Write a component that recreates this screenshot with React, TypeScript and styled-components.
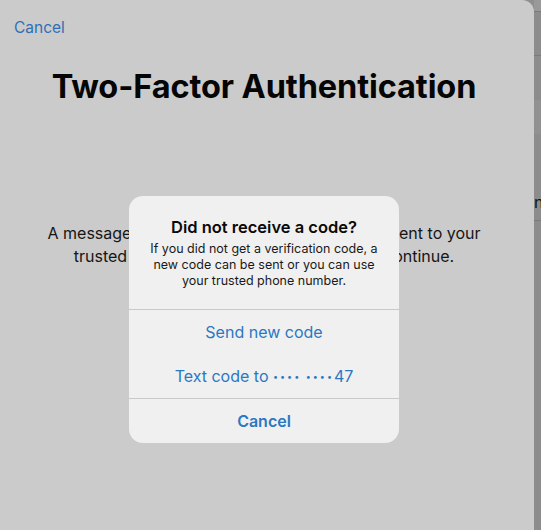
import React from "react";
import styled, { createGlobalStyle } from "styled-components";

const GlobalStyle = createGlobalStyle`
  html, body {
    margin: 0;
    padding: 0;
    background: #8f8f8f;
  }
  body {
    font-family: Inter, "Liberation Sans", Arial, sans-serif;
    -webkit-font-smoothing: antialiased;
  }
`;

const Screen = styled.div`
  position: relative;
  width: 541px;
  height: 530px;
  display: flex;
  overflow: hidden;
`;

const Sheet = styled.div`
  flex: 0 0 534px;
  height: 100%;
  background: #cbcbcb;
  border-top-right-radius: 12px;
  display: flex;
  flex-direction: column;
  align-items: center;
`;

const TopBar = styled.div`
  align-self: stretch;
  padding: 17px 14px 0;
  height: 36px;
  box-sizing: border-box;
`;

const LinkButton = styled.button`
  border: none;
  background: none;
  padding: 0;
  font-family: inherit;
  font-size: 15.5px;
  color: #2f6fb6;
  cursor: pointer;
`;

const Title = styled.h1`
  margin: 31px 0 0;
  font-size: 32.5px;
  font-weight: 700;
  color: #050505;
  letter-spacing: -0.1px;
  transform: translateX(-3px);
`;

const Message = styled.p`
  margin: 116px 0 0;
  text-align: center;
  font-size: 16px;
  line-height: 23px;
  color: #151515;
  transform: translateX(-3px);
`;

// the app behind the sheet, dimmed
const BackApp = styled.div`
  flex: 1;
  min-width: 0;
  display: flex;
  flex-direction: column;
  background: #8c8c8c;
`;

const BackRow = styled.div<{ $h: number; $shade?: string; $line?: boolean }>`
  height: ${(p) => p.$h}px;
  background: ${(p) => p.$shade || "transparent"};
  border-bottom: ${(p) => (p.$line ? "1px solid #7a7a7a" : "none")};
  font-size: 16px;
  color: #111;
  overflow: hidden;
  display: flex;
  align-items: flex-end;
  white-space: nowrap;
`;

const Alert = styled.div`
  position: absolute;
  left: 129px;
  top: 196px;
  width: 270px;
  background: #f0f0f0;
  border-radius: 14px;
  overflow: hidden;
  display: flex;
  flex-direction: column;
`;

const AlertBody = styled.div`
  padding: 21px 16px 20px;
  text-align: center;
`;

const AlertTitle = styled.div`
  font-size: 16.5px;
  font-weight: 600;
  color: #0a0a0a;
  line-height: 21px;
`;

const AlertText = styled.div`
  margin-top: 3px;
  font-size: 12.5px;
  line-height: 16px;
  color: #1a1a1a;
`;

const ActionGroup = styled.div`
  border-top: 1px solid #c9c9cc;
  display: flex;
  flex-direction: column;
`;

const Action = styled.button<{ $bold?: boolean }>`
  height: 44px;
  border: none;
  background: none;
  padding: 0;
  font-family: inherit;
  font-size: 16px;
  font-weight: ${(p) => (p.$bold ? 600 : 400)};
  color: #2a78c2;
  cursor: pointer;
`;

const Dots = styled.span`
  font-size: 9px;
  letter-spacing: 2px;
  vertical-align: 2px;
`;

export default function App() {
  return (
    <>
      <GlobalStyle />
      <Screen>
        <Sheet>
          <TopBar>
            <LinkButton>Cancel</LinkButton>
          </TopBar>
          <Title>Two-Factor Authentication</Title>
          <Message>
            A message with a verification code has been sent to your
            <br />
            trusted phone number. Enter the code to continue.
          </Message>
        </Sheet>
        <BackApp>
          <BackRow $h={11} $shade="#999999" $line />
          <BackRow $h={43} $line />
          <BackRow $h={44} />
          <BackRow $h={34} $shade="#919191" />
          <BackRow $h={86} $line>
            <span style={{ marginBottom: 8 }}>n</span>
          </BackRow>
          <BackRow $h={46} />
        </BackApp>
        <Alert>
          <AlertBody>
            <AlertTitle>Did not receive a code?</AlertTitle>
            <AlertText>
              If you did not get a verification code, a new code can be sent or
              you can use your trusted phone number.
            </AlertText>
          </AlertBody>
          <ActionGroup>
            <Action>Send new code</Action>
            <Action>
              Text code to <Dots>••••</Dots> <Dots>••••</Dots>47
            </Action>
          </ActionGroup>
          <ActionGroup>
            <Action $bold>Cancel</Action>
          </ActionGroup>
        </Alert>
      </Screen>
    </>
  );
}
